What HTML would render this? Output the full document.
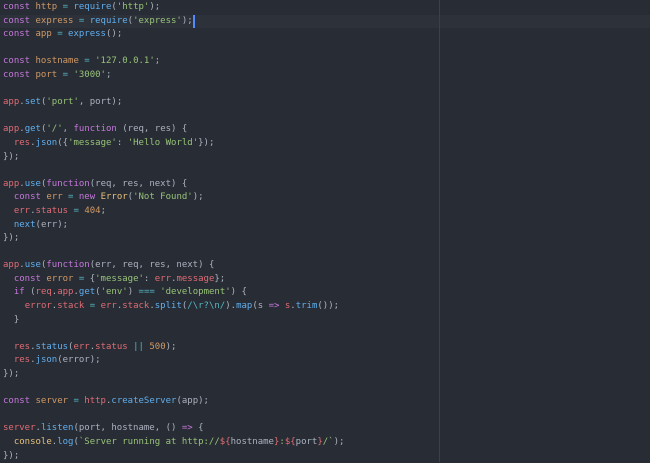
<!DOCTYPE html>
<html><head><meta charset="utf-8">
<style>
html,body{margin:0;padding:0;}
body{width:650px;height:462px;background:#282c34;position:relative;overflow:hidden;}
.ruler{position:absolute;left:439px;top:0;width:1px;height:462px;background:#3b404b;}
.hl{position:absolute;left:0;top:14.6px;width:650px;height:13.6px;background:#2c313a;}
.cursor{position:absolute;left:193px;top:15px;width:1.5px;height:13px;background:#528bff;}
pre{position:absolute;left:3px;top:1px;margin:0;font-family:"DejaVu Sans Mono","Liberation Mono",monospace;font-size:9px;line-height:13.6px;color:#abb2bf;}
.k{color:#c678dd}.v{color:#e06c75}.f{color:#61afef}.s{color:#98c379}.n{color:#d19a66}.o{color:#56b6c2}.y{color:#e5c07b}.c{color:#d19a66}
</style></head><body>
<div class="hl"></div>
<div class="ruler"></div>
<pre><span class="k">const</span> <span class="c">http</span> <span class="o">=</span> <span class="f">require</span>(<span class="s">'http'</span>);
<span class="k">const</span> <span class="c">express</span> <span class="o">=</span> <span class="f">require</span>(<span class="s">'express'</span>);
<span class="k">const</span> <span class="c">app</span> <span class="o">=</span> <span class="f">express</span>();

<span class="k">const</span> <span class="c">hostname</span> <span class="o">=</span> <span class="s">'127.0.0.1'</span>;
<span class="k">const</span> <span class="c">port</span> <span class="o">=</span> <span class="s">'3000'</span>;

<span class="v">app</span>.<span class="f">set</span>(<span class="s">'port'</span>, port);

<span class="v">app</span>.<span class="f">get</span>(<span class="s">'/'</span>, <span class="k">function</span> (req, res) {
  <span class="v">res</span>.<span class="f">json</span>({<span class="s">'message'</span>: <span class="s">'Hello World'</span>});
});

<span class="v">app</span>.<span class="f">use</span>(<span class="k">function</span>(req, res, next) {
  <span class="k">const</span> <span class="c">err</span> <span class="o">=</span> <span class="k">new</span> <span class="y">Error</span>(<span class="s">'Not Found'</span>);
  <span class="v">err</span>.<span class="v">status</span> <span class="o">=</span> <span class="n">404</span>;
  <span class="f">next</span>(err);
});

<span class="v">app</span>.<span class="f">use</span>(<span class="k">function</span>(err, req, res, next) {
  <span class="k">const</span> <span class="c">error</span> <span class="o">=</span> {<span class="s">'message'</span>: <span class="v">err</span>.<span class="v">message</span>};
  <span class="k">if</span> (<span class="v">req</span>.<span class="v">app</span>.<span class="f">get</span>(<span class="s">'env'</span>) <span class="o">===</span> <span class="s">'development'</span>) {
    <span class="v">error</span>.<span class="v">stack</span> <span class="o">=</span> <span class="v">err</span>.<span class="v">stack</span>.<span class="f">split</span>(<span class="o">/\r?\n/</span>).<span class="f">map</span>(s <span class="k">=&gt;</span> <span class="v">s</span>.<span class="f">trim</span>());
  }

  <span class="v">res</span>.<span class="f">status</span>(<span class="v">err</span>.<span class="v">status</span> <span class="o">||</span> <span class="n">500</span>);
  <span class="v">res</span>.<span class="f">json</span>(error);
});

<span class="k">const</span> <span class="c">server</span> <span class="o">=</span> <span class="v">http</span>.<span class="f">createServer</span>(app);

<span class="v">server</span>.<span class="f">listen</span>(port, hostname, () <span class="k">=&gt;</span> {
  <span class="y">console</span>.<span class="f">log</span>(<span class="s">`Server running at http://</span><span class="v">${</span>hostname<span class="v">}</span><span class="s">:</span><span class="v">${</span>port<span class="v">}</span><span class="s">/`</span>);
});</pre>
<div class="cursor"></div>
</body></html>
